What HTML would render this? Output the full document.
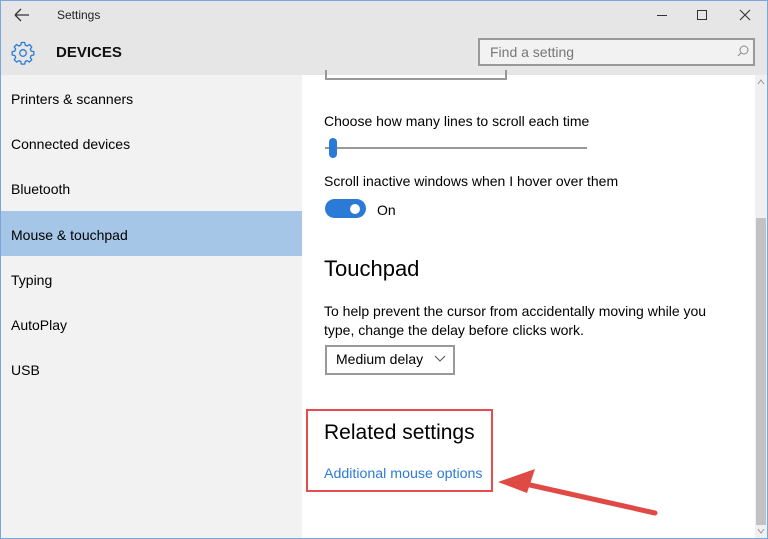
<!DOCTYPE html>
<html><head><style>
*{margin:0;padding:0;box-sizing:border-box}
body{width:768px;height:539px;overflow:hidden;font-family:"Liberation Sans",sans-serif;background:#fff;position:relative;color:#000}
.a{position:absolute}
.t{font-size:14px;white-space:nowrap}
</style></head><body>
<div class="a" style="left:0;top:0;width:768px;height:539px;border:1px solid #7aa7d8"></div>
<div class="a" style="top:1px;left:1px;width:766px;height:74px;background:#e6e6e6"></div>
<svg class="a" style="left:14px;top:8px" width="16" height="14"><path d="M1 7H15M1 7L7 1M1 7L7 13" stroke="#333" stroke-width="1.3" fill="none"/></svg>
<div class="a t" style="left:57px;top:8px;font-size:12px;color:#222">Settings</div>
<div class="a" style="left:657px;top:15px;width:10px;height:1px;background:#333"></div>
<div class="a" style="left:697px;top:10px;width:10px;height:10px;border:1px solid #333"></div>
<svg class="a" style="left:739px;top:9px" width="12" height="12"><path d="M1 1L11 11M11 1L1 11" stroke="#333" stroke-width="1.1"/></svg>
<svg class="a" style="left:11px;top:41px" width="24" height="24" viewBox="0 0 24 24">
<path d="M10.3 1.5h3.4l.5 2.6 2 .9 2.2-1.5 2.4 2.4-1.5 2.2.9 2 2.6.5v3.4l-2.6.5-.9 2 1.5 2.2-2.4 2.4-2.2-1.5-2 .9-.5 2.6h-3.4l-.5-2.6-2-.9-2.2 1.5-2.4-2.4 1.5-2.2-.9-2-2.6-.5v-3.4l2.6-.5.9-2-1.5-2.2 2.4-2.4 2.2 1.5 2-.9z" fill="none" stroke="#2b7bd6" stroke-width="1.3" stroke-linejoin="round"/>
<circle cx="12" cy="12" r="3.3" fill="none" stroke="#2b7bd6" stroke-width="1.3"/></svg>
<div class="a t" style="left:56px;top:44px;font-size:15px;font-weight:bold;color:#111">DEVICES</div>
<div class="a" style="left:478px;top:38px;width:277px;height:28px;border:2px solid #999;background:#f2f2f2"></div>
<div class="a t" style="left:490px;top:44px;color:#777">Find a setting</div>
<svg class="a" style="left:737px;top:45px" width="12" height="12"><circle cx="7" cy="5" r="4" fill="none" stroke="#888"/><path d="M4 8L1 11" stroke="#888"/></svg>
<div class="a" style="left:1px;top:75px;width:301px;height:463px;background:#f2f2f2"></div>
<div class="a" style="left:1px;top:211px;width:301px;height:45px;background:#a5c6e6"></div>
<div class="a t" style="left:11px;top:91px">Printers &amp; scanners</div>
<div class="a t" style="left:11px;top:136px">Connected devices</div>
<div class="a t" style="left:11px;top:181px">Bluetooth</div>
<div class="a t" style="left:11px;top:227px">Mouse &amp; touchpad</div>
<div class="a t" style="left:11px;top:272px">Typing</div>
<div class="a t" style="left:11px;top:317px">AutoPlay</div>
<div class="a t" style="left:11px;top:362px">USB</div>
<div class="a" style="left:325px;top:70px;width:182px;height:10px;border:2px solid #999;border-top:none"></div>
<div class="a t" style="left:324px;top:113px">Choose how many lines to scroll each time</div>
<div class="a" style="left:325px;top:147px;width:262px;height:2px;background:#999"></div>
<div class="a" style="left:329px;top:138px;width:8px;height:20px;border-radius:4px;background:#2b7bd6"></div>
<div class="a t" style="left:324px;top:173px">Scroll inactive windows when I hover over them</div>
<div class="a" style="left:325px;top:199px;width:41px;height:19px;border-radius:10px;background:#2b7bd6"></div>
<div class="a" style="left:350px;top:204px;width:10px;height:10px;border-radius:5px;background:#fff"></div>
<div class="a t" style="left:377px;top:202px">On</div>
<div class="a t" style="left:324px;top:256px;font-size:22px">Touchpad</div>
<div class="a t" style="left:324px;top:302px;line-height:19px">To help prevent the cursor from accidentally moving while you<br>type, change the delay before clicks work.</div>
<div class="a" style="left:325px;top:345px;width:130px;height:30px;border:2px solid #999"></div>
<div class="a t" style="left:336px;top:351px">Medium delay</div>
<svg class="a" style="left:434px;top:355px" width="12" height="8"><path d="M1 1L6 6L11 1" stroke="#555" fill="none"/></svg>
<div class="a" style="left:306px;top:409px;width:187px;height:83px;border:2px solid #e84c4c"></div>
<div class="a t" style="left:324px;top:421px;font-size:21px">Related settings</div>
<div class="a t" style="left:324px;top:466px;color:#2b7bd6;font-size:14.2px">Additional mouse options</div>
<svg class="a" style="left:490px;top:460px" width="180" height="60"><path d="M165 53L40 25" stroke="#e04a45" stroke-width="5" stroke-linecap="round"/><path d="M8 22L45 9L37 33Z" fill="#e04a45"/></svg>
<div class="a" style="left:755px;top:75px;width:12px;height:463px;background:#f0f0f0"></div>
<div class="a" style="left:756px;top:218px;width:10px;height:307px;background:#c2c2c2"></div>
<svg class="a" style="left:757px;top:79px" width="8" height="6"><path d="M1 5L4 1L7 5" stroke="#999" fill="none"/></svg>
<svg class="a" style="left:757px;top:528px" width="8" height="6"><path d="M1 1L4 5L7 1" stroke="#999" fill="none"/></svg>
</body></html>
